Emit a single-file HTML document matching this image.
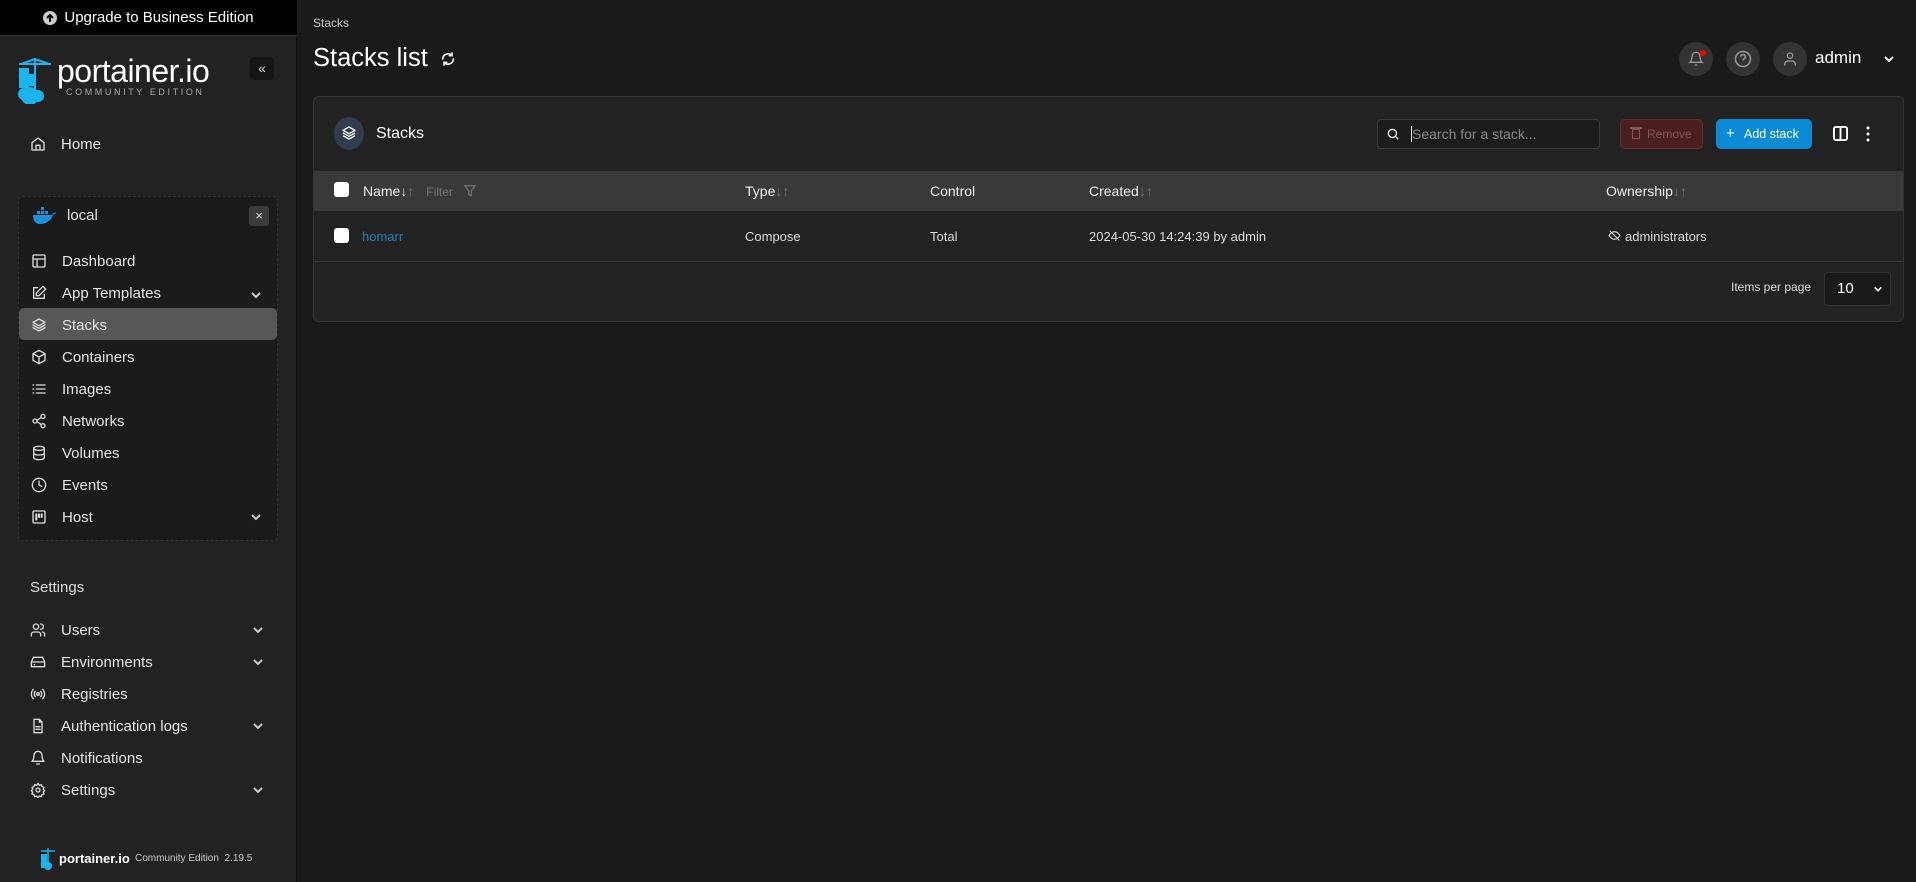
<!DOCTYPE html>
<html><head><meta charset="utf-8"><style>
*{box-sizing:border-box;margin:0;padding:0}
body{width:1916px;height:882px;background:#1a1a1a;font-family:"Liberation Sans",sans-serif;color:#e5e5e5;position:relative;overflow:hidden}
.a{position:absolute}
#side{left:0;top:0;width:297px;height:882px;background:#222;border-right:1px solid #111}
#banner{left:0;top:0;width:297px;height:36px;background:#000;border-bottom:1px solid #333;color:#fff;font-size:15px;display:flex;align-items:center;justify-content:center;gap:7px}
.nav{position:absolute;left:30px;font-size:15px;color:#e5e5e5;display:flex;align-items:center;height:20px}
.nav svg{width:16px;height:16px;margin-right:15px;fill:none;stroke:#ddd;stroke-width:2;stroke-linecap:round;stroke-linejoin:round}
.chev{position:absolute;left:250px;width:12px;height:12px;fill:none;stroke:#ccc;stroke-width:2}
.th{position:absolute;top:183px;font-size:14px;color:#eee}
.ar{color:#777}
.td{position:absolute;top:229px;font-size:13px;color:#ddd}
.cb{position:absolute;width:15px;height:15px;background:#fff;border-radius:3px}
</style></head><body>
<div id="side" class="a">
<div id="banner" class="a"><svg width="14" height="14" viewBox="0 0 14 14"><circle cx="7" cy="7" r="7" fill="#ccc"/><path d="M7 11V4M4 7l3-3 3 3" stroke="#000" stroke-width="2" fill="none"/></svg>Upgrade to Business Edition</div>
<svg class="a" style="left:17px;top:56px" width="36" height="48" viewBox="0 0 36 48"><path d="M2 8h32M18 2v44M18 3L4 8M18 3l14 5" stroke="#1ab4ee" stroke-width="2" fill="none"/><rect x="2" y="12" width="10" height="20" fill="#1ab4ee"/><rect x="12" y="18" width="5" height="12" fill="#1ab4ee"/><circle cx="13" cy="40" r="9" fill="#1ab4ee"/><circle cx="7" cy="38" r="6" fill="#1ab4ee"/><circle cx="21" cy="40" r="6" fill="#1ab4ee"/></svg>
<div class="a" style="left:57px;top:53px;font-size:32px;color:#fff;letter-spacing:-0.5px">portainer.io</div>
<div class="a" style="left:66px;top:87px;font-size:9px;color:#aaa;letter-spacing:2.6px">COMMUNITY EDITION</div>
<div class="a" style="left:250px;top:57px;width:24px;height:23px;background:#151515;border-radius:4px;color:#ddd;font-size:14px;text-align:center;line-height:22px">«</div>
<div class="nav" style="top:134px"><svg viewBox="0 0 24 24"><path d="M3 10l9-7 9 7v11H3zM9 21v-7h6v7"/></svg>Home</div>
<div class="a" style="left:18px;top:196px;width:260px;height:345px;border:1px dashed #333;border-radius:5px;background:#1b1b1c"></div>
<svg class="a" style="left:32px;top:207px" width="24" height="18" viewBox="0 0 24 18"><path d="M1 8h19c2-3 3-3 4-2-1 1-2 1-3 2-2 6-8 9-13 9C3 17 1 13 1 8z" fill="#1d91e0"/><rect x="5" y="4" width="3" height="3" fill="#1d91e0"/><rect x="9" y="4" width="3" height="3" fill="#1d91e0"/><rect x="13" y="4" width="3" height="3" fill="#1d91e0"/><rect x="9" y="0" width="3" height="3" fill="#1d91e0"/></svg>
<div class="a" style="left:67px;top:207px;font-size:15px">local</div>
<div class="a" style="left:249px;top:206px;width:20px;height:20px;background:#3a3a3a;border-radius:3px;color:#ddd;font-size:13px;text-align:center;line-height:20px">×</div>
<div class="a" style="left:19px;top:308px;width:258px;height:32px;background:#575757;border-radius:5px"></div>
<div class="nav" style="top:251px;left:31px"><svg viewBox="0 0 24 24"><rect x="3" y="3" width="18" height="18" rx="2"/><path d="M3 9h18M9 21V9"/></svg>Dashboard</div>
<div class="nav" style="top:283px;left:31px"><svg viewBox="0 0 24 24"><path d="M20 14v6H4V4h6M18 2l4 4-10 10H8v-4z"/></svg>App Templates</div>
<svg class="chev" style="top:289px" viewBox="0 0 12 12"><path d="M2 4l4 4 4-4"/></svg>
<div class="nav" style="top:315px;left:31px"><svg viewBox="0 0 24 24"><path d="M12 3l9 5-9 5-9-5zM3 12l9 5 9-5M3 16l9 5 9-5"/></svg>Stacks</div>
<div class="nav" style="top:347px;left:31px"><svg viewBox="0 0 24 24"><path d="M12 2l9 5v10l-9 5-9-5V7zM3 7l9 5 9-5M12 12v10"/></svg>Containers</div>
<div class="nav" style="top:379px;left:31px"><svg viewBox="0 0 24 24"><path d="M8 6h13M8 12h13M8 18h13M3 6h1M3 12h1M3 18h1"/></svg>Images</div>
<div class="nav" style="top:411px;left:31px"><svg viewBox="0 0 24 24"><circle cx="18" cy="5" r="3"/><circle cx="6" cy="12" r="3"/><circle cx="18" cy="19" r="3"/><path d="M9 11l6-4M9 13l6 4"/></svg>Networks</div>
<div class="nav" style="top:443px;left:31px"><svg viewBox="0 0 24 24"><ellipse cx="12" cy="5" rx="8" ry="3"/><path d="M4 5v14c0 2 4 3 8 3s8-1 8-3V5M4 12c0 2 4 3 8 3s8-1 8-3"/></svg>Volumes</div>
<div class="nav" style="top:475px;left:31px"><svg viewBox="0 0 24 24"><circle cx="12" cy="12" r="10"/><path d="M12 6v6l4 2"/></svg>Events</div>
<div class="nav" style="top:507px;left:31px"><svg viewBox="0 0 24 24"><rect x="3" y="3" width="18" height="18" rx="2"/><path d="M8 8v8M12 8v4M16 8v4" stroke-width="3"/></svg>Host</div>
<svg class="chev" style="top:511px" viewBox="0 0 12 12"><path d="M2 4l4 4 4-4"/></svg>
<div class="a" style="left:30px;top:579px;font-size:15px;color:#ddd">Settings</div>
<div class="nav" style="top:620px"><svg viewBox="0 0 24 24"><circle cx="9" cy="7" r="4"/><path d="M2 21v-2a4 4 0 0 1 4-4h6a4 4 0 0 1 4 4v2M16 3a4 4 0 0 1 0 8M22 21v-2a4 4 0 0 0-3-4"/></svg>Users</div>
<svg class="chev" style="top:624px;left:252px" viewBox="0 0 12 12"><path d="M2 4l4 4 4-4"/></svg>
<div class="nav" style="top:652px"><svg viewBox="0 0 24 24"><path d="M2 12h20v7H2zM5 5h14l3 7H2zM6 16h1"/></svg>Environments</div>
<svg class="chev" style="top:656px;left:252px" viewBox="0 0 12 12"><path d="M2 4l4 4 4-4"/></svg>
<div class="nav" style="top:684px"><svg viewBox="0 0 24 24"><circle cx="12" cy="12" r="2"/><path d="M8 8a6 6 0 0 0 0 8M16 8a6 6 0 0 1 0 8M5 5a10 10 0 0 0 0 14M19 5a10 10 0 0 1 0 14"/></svg>Registries</div>
<div class="nav" style="top:716px"><svg viewBox="0 0 24 24"><path d="M14 2H6v20h12V6zM14 2v4h4M9 13h6M9 17h6"/></svg>Authentication logs</div>
<svg class="chev" style="top:720px;left:252px" viewBox="0 0 12 12"><path d="M2 4l4 4 4-4"/></svg>
<div class="nav" style="top:748px"><svg viewBox="0 0 24 24"><path d="M6 8a6 6 0 0 1 12 0c0 7 3 9 3 9H3s3-2 3-9M10 21h4"/></svg>Notifications</div>
<div class="nav" style="top:780px"><svg viewBox="0 0 24 24"><circle cx="12" cy="12" r="3"/><path d="M12 2l2 3 3-1 1 3 3 1-1 3 2 2-2 2 1 3-3 1-1 3-3-1-2 3-2-3-3 1-1-3-3-1 1-3-2-2 2-2-1-3 3-1 1-3 3 1z"/></svg>Settings</div>
<svg class="chev" style="top:784px;left:252px" viewBox="0 0 12 12"><path d="M2 4l4 4 4-4"/></svg>
<svg class="a" style="left:40px;top:848px" width="16" height="22" viewBox="0 0 16 22"><path d="M1 3h14M8 0v22" stroke="#1ab4ee" stroke-width="1.5"/><rect x="1" y="6" width="6" height="14" fill="#1ab4ee"/><circle cx="8" cy="18" r="4" fill="#1ab4ee"/></svg>
<div class="a" style="left:59px;top:851px;font-size:13px;color:#fff;font-weight:bold">portainer.io</div>
<div class="a" style="left:135px;top:853px;font-size:10px;color:#ccc">Community Edition &nbsp;2.19.5</div>
</div>

<div class="a" style="left:313px;top:16px;font-size:12px;color:#ccc">Stacks</div>
<div class="a" style="left:313px;top:44px;font-size:25.5px;color:#fff">Stacks list</div>
<svg class="a" style="left:440px;top:51px" width="16" height="16" viewBox="0 0 24 24" fill="none" stroke="#eee" stroke-width="2.5" stroke-linecap="round"><path d="M20 12a8 8 0 0 1-14 5M4 12a8 8 0 0 1 14-5M18 3v4h-4M6 21v-4h4"/></svg>

<div class="a" style="left:1679px;top:42px;width:34px;height:34px;border-radius:50%;background:#333"></div>
<svg class="a" style="left:1688px;top:50px" width="16" height="18" viewBox="0 0 24 24" fill="none" stroke="#999" stroke-width="2"><path d="M6 8a6 6 0 0 1 12 0c0 7 3 9 3 9H3s3-2 3-9M10 21h4"/></svg>
<div class="a" style="left:1700px;top:50px;width:6px;height:6px;border-radius:50%;background:#f00"></div>
<div class="a" style="left:1726px;top:42px;width:34px;height:34px;border-radius:50%;background:#333"></div>
<svg class="a" style="left:1734px;top:50px" width="18" height="18" viewBox="0 0 24 24" fill="none" stroke="#999" stroke-width="2"><circle cx="12" cy="12" r="10"/><path d="M9 9a3 3 0 1 1 4 3c-1 .5-1 1-1 2M12 17h.01"/></svg>
<div class="a" style="left:1773px;top:42px;width:34px;height:34px;border-radius:50%;background:#333"></div>
<svg class="a" style="left:1782px;top:50px" width="16" height="18" viewBox="0 0 24 24" fill="none" stroke="#999" stroke-width="2"><circle cx="12" cy="7" r="4"/><path d="M4 22v-2a5 5 0 0 1 5-5h6a5 5 0 0 1 5 5v2"/></svg>
<div class="a" style="left:1815px;top:48px;font-size:17px;color:#fff">admin</div>
<svg class="a" style="left:1883px;top:53px" width="12" height="12" viewBox="0 0 12 12" fill="none" stroke="#eee" stroke-width="2"><path d="M2 4l4 4 4-4"/></svg>

<div class="a" style="left:313px;top:96px;width:1591px;height:226px;background:#222;border:1px solid #333;border-radius:6px"></div>
<div class="a" style="left:334px;top:117px;width:30px;height:33px;border-radius:50%;background:#313c4e"></div>
<svg class="a" style="left:341px;top:125px" width="16" height="16" viewBox="0 0 24 24" fill="none" stroke="#fff" stroke-width="2" stroke-linejoin="round"><path d="M12 3l9 5-9 5-9-5zM3 12l9 5 9-5M3 16l9 5 9-5"/></svg>
<div class="a" style="left:376px;top:125px;font-size:16px;color:#fff">Stacks</div>
<div class="a" style="left:1377px;top:119px;width:223px;height:30px;border:1px solid #3a3a3a;border-radius:4px;background:#1c1c1c"></div>
<svg class="a" style="left:1386px;top:127px" width="14" height="14" viewBox="0 0 24 24" fill="none" stroke="#ddd" stroke-width="2.5"><circle cx="11" cy="11" r="7"/><path d="M16 16l5 5"/></svg>
<div class="a" style="left:1411px;top:126px;width:1px;height:16px;background:#eee"></div>
<div class="a" style="left:1412px;top:126px;font-size:14px;color:#888">Search for a stack...</div>
<div class="a" style="left:1620px;top:119px;width:83px;height:30px;background:#4a1f1f;border:1px solid #6b2a2a;border-radius:5px;font-size:12px;color:#8a5555;line-height:28px;padding-left:26px">Remove</div>
<div class="a" style="left:1632px;top:129px;width:8px;height:10px;border:1.5px solid #8a5555;border-radius:1px"></div>
<div class="a" style="left:1630px;top:127px;width:12px;height:1.5px;background:#8a5555"></div>
<div class="a" style="left:1716px;top:119px;width:96px;height:30px;background:#0b8ad5;border-radius:5px;font-size:12.5px;color:#fff;line-height:30px;padding-left:28px">Add stack</div>
<div class="a" style="left:1726px;top:119px;font-size:15px;color:#fff;line-height:30px">+</div>
<svg class="a" style="left:1833px;top:126px" width="15" height="15" viewBox="0 0 16 16" fill="none" stroke="#fff" stroke-width="2"><rect x="1" y="1" width="14" height="14" rx="2"/><path d="M8 1v14"/></svg>
<svg class="a" style="left:1865px;top:126px" width="6" height="16" viewBox="0 0 6 16" fill="#fff"><circle cx="3" cy="2" r="1.5"/><circle cx="3" cy="8" r="1.5"/><circle cx="3" cy="14" r="1.5"/></svg>

<div class="a" style="left:314px;top:171px;width:1589px;height:40px;background:#393939"></div>
<div class="cb" style="left:334px;top:182px"></div>
<div class="th" style="left:363px">Name<span style="color:#ddd">↓</span><span class="ar">↑</span> <span style="font-size:12px;color:#777;margin-left:8px">Filter</span></div>
<svg class="a" style="left:463px;top:184px" width="14" height="14" viewBox="0 0 24 24" fill="none" stroke="#777" stroke-width="2"><path d="M3 3h18l-7 9v8l-4-2v-6z"/></svg>
<div class="th" style="left:745px">Type<span class="ar">↓↑</span></div>
<div class="th" style="left:930px">Control</div>
<div class="th" style="left:1089px">Created<span class="ar">↓↑</span></div>
<div class="th" style="left:1606px">Ownership<span class="ar">↓↑</span></div>
<div class="cb" style="left:334px;top:228px"></div>
<div class="td" style="left:362px;color:#1d7fc0">homarr</div>
<div class="td" style="left:745px">Compose</div>
<div class="td" style="left:930px">Total</div>
<div class="td" style="left:1089px">2024-05-30 14:24:39 by admin</div>
<svg class="a" style="left:1608px;top:229px" width="13" height="13" viewBox="0 0 24 24" fill="none" stroke="#ddd" stroke-width="2"><path d="M2 12s4-7 10-7 10 7 10 7-4 7-10 7S2 12 2 12zM3 3l18 18"/></svg>
<div class="td" style="left:1625px">administrators</div>
<div class="a" style="left:314px;top:261px;width:1589px;height:1px;background:#3a3a3a"></div>
<div class="a" style="left:1731px;top:280px;font-size:12px;color:#ddd">Items per page</div>
<div class="a" style="left:1824px;top:272px;width:67px;height:34px;background:#1a1a1a;border:1px solid #333;border-radius:4px;font-size:15px;color:#fff;line-height:32px;padding-left:12px">10</div>
<svg class="a" style="left:1873px;top:284px" width="10" height="10" viewBox="0 0 12 12" fill="none" stroke="#eee" stroke-width="2"><path d="M2 4l4 4 4-4"/></svg>
</body></html>
